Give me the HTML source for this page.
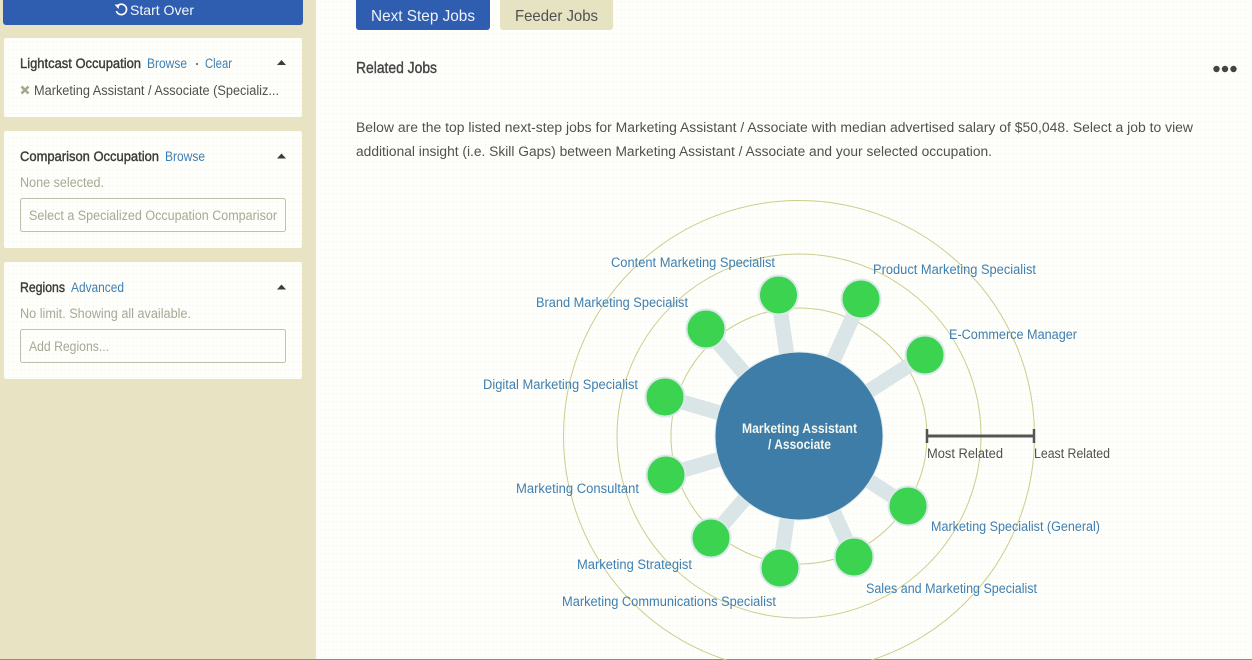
<!DOCTYPE html>
<html lang="en"><head><meta charset="utf-8"><title>Related Jobs</title>
<style>
html,body{margin:0;padding:0;width:1252px;height:660px;overflow:hidden;background:#fefef8}
svg{display:block}
text{font-family:"Liberation Sans",sans-serif;font-size:13.500px;fill:#505050}
.l{fill:#3f7fb0}
.m{fill:#a8a896}
.h{fill:#3c3c3c;stroke:#3c3c3c;stroke-width:.4px}
</style></head><body>
<svg width="1252" height="660" viewBox="0 0 1252 660" xmlns="http://www.w3.org/2000/svg">
<defs>
<pattern id="d" width="8" height="8" patternUnits="userSpaceOnUse">
<rect width="8" height="8" fill="#fefefb"/>
<rect x="1" y="1" width="1" height="1" fill="#ffffa0"/>
<rect x="5" y="5" width="1" height="1" fill="#ffffa0"/>
<rect x="5" y="1" width="1" height="1" fill="#e8e8f6"/>
</pattern>
</defs>
<rect width="1252" height="660" fill="url(#d)"/>
<rect width="316" height="660" fill="#e8e3c2"/>
<rect x="0" y="659" width="1252" height="1" fill="#8c8c8c"/>

<!-- sidebar -->
<rect x="3" y="-4" width="300" height="29" rx="3" fill="#2f5db0"/>
<path d="M117 6.500a5.200 5.200 0 1 1-.6 4.600" fill="none" stroke="#fff" stroke-width="1.700"/>
<path d="M114.500 4.500l5 .2-1 4.300z" fill="#fff"/>
<text x="130" y="15" textLength="64" lengthAdjust="spacingAndGlyphs" style="fill:#f4f6fb;font-size:14px">Start Over</text>

<rect x="4" y="38" width="298" height="79" rx="2" fill="url(#d)"/>
<rect x="4" y="131" width="298" height="117" rx="2" fill="url(#d)"/>
<rect x="4" y="262" width="298" height="117" rx="2" fill="url(#d)"/>

<text class="h" x="20" y="68" textLength="121" lengthAdjust="spacingAndGlyphs">Lightcast Occupation</text>
<text class="l" x="147" y="68" textLength="40" lengthAdjust="spacingAndGlyphs">Browse</text>
<circle cx="197" cy="64" r="1" fill="#555"/>
<text class="l" x="205" y="68" textLength="27" lengthAdjust="spacingAndGlyphs">Clear</text>
<path d="M277 65l4.500-5 4.500 5z" fill="#3c3c3c"/>
<path d="M21.500 86.500l7 7M28.500 86.500l-7 7" stroke="#a5a58f" stroke-width="2.600" fill="none"/>
<text x="34" y="95" textLength="245" lengthAdjust="spacingAndGlyphs">Marketing Assistant / Associate (Specializ...</text>

<text class="h" x="20" y="161" textLength="139" lengthAdjust="spacingAndGlyphs">Comparison Occupation</text>
<text class="l" x="165" y="161" textLength="40" lengthAdjust="spacingAndGlyphs">Browse</text>
<path d="M277 158.500l4.500-5 4.500 5z" fill="#3c3c3c"/>
<text class="m" x="20" y="187" textLength="84" lengthAdjust="spacingAndGlyphs">None selected.</text>
<rect x="20.500" y="198.500" width="265" height="33" rx="2" fill="none" stroke="#c0c0ae"/>
<text class="m" x="29" y="220" textLength="248" lengthAdjust="spacingAndGlyphs">Select a Specialized Occupation Comparisor</text>

<text class="h" x="20" y="292" textLength="45" lengthAdjust="spacingAndGlyphs">Regions</text>
<text class="l" x="71" y="292" textLength="53" lengthAdjust="spacingAndGlyphs">Advanced</text>
<path d="M277 289.500l4.500-5 4.500 5z" fill="#3c3c3c"/>
<text class="m" x="20" y="318" textLength="171" lengthAdjust="spacingAndGlyphs">No limit. Showing all available.</text>
<rect x="20.500" y="329.500" width="265" height="33" rx="2" fill="none" stroke="#c0c0ae"/>
<text class="m" x="29" y="351" textLength="80" lengthAdjust="spacingAndGlyphs">Add Regions...</text>

<!-- tabs -->
<rect x="356" y="-4" width="134" height="34" rx="3" fill="#2f5db0"/>
<text x="371" y="21" textLength="104" lengthAdjust="spacingAndGlyphs" style="fill:#f0f3fa;font-size:16px">Next Step Jobs</text>
<rect x="500" y="-4" width="113" height="34" rx="3" fill="#e6e3c3"/>
<text x="515" y="21" textLength="83" lengthAdjust="spacingAndGlyphs" style="font-size:16px">Feeder Jobs</text>

<text x="356" y="73" textLength="81" lengthAdjust="spacingAndGlyphs" style="fill:#444;stroke:#444;stroke-width:.4px;font-size:16px">Related Jobs</text>
<circle cx="1216.500" cy="69" r="3.200" fill="#444"/><circle cx="1225" cy="69" r="3.200" fill="#444"/><circle cx="1233.500" cy="69" r="3.200" fill="#444"/>

<text x="356" y="132" textLength="837" lengthAdjust="spacingAndGlyphs">Below are the top listed next-step jobs for Marketing Assistant / Associate with median advertised salary of $50,048. Select a job to view</text>
<text x="356" y="156" textLength="636" lengthAdjust="spacingAndGlyphs">additional insight (i.e. Skill Gaps) between Marketing Assistant / Associate and your selected occupation.</text>

<!-- rings -->
<g fill="none" stroke="#cdcd8e" stroke-width="1">
<circle cx="799" cy="436" r="128"/>
<circle cx="799" cy="436" r="182"/>
<circle cx="799" cy="436" r="235.500"/>
</g>

<!-- links -->
<g stroke="#d9e5e6" stroke-width="15" fill="none">
<path d="M799 436L778 295"/><path d="M799 436L861 299"/><path d="M799 436L925 355"/>
<path d="M799 436L706 329"/><path d="M799 436L665 397"/><path d="M799 436L666 475"/>
<path d="M799 436L711 538"/><path d="M799 436L780 568"/><path d="M799 436L854 557"/><path d="M799 436L908 506"/>
</g>

<!-- nodes -->
<g fill="#3bd350" stroke="#dce9ea" stroke-width="2">
<circle cx="778.500" cy="295" r="19.500"/><circle cx="861" cy="299" r="19.500"/><circle cx="925" cy="355" r="19.500"/>
<circle cx="706" cy="329" r="19.500"/><circle cx="665" cy="397" r="19.500"/><circle cx="666" cy="475" r="19.500"/>
<circle cx="711" cy="538" r="19.500"/><circle cx="780" cy="568" r="19.500"/><circle cx="854" cy="557" r="19.500"/><circle cx="908" cy="506" r="19.500"/>
</g>
<circle cx="799" cy="436" r="84" fill="#3d7da8" stroke="#dce9ea" stroke-width="1"/>
<text x="742" y="433" textLength="115" lengthAdjust="spacingAndGlyphs" style="fill:#f6f6ee;font-weight:bold">Marketing Assistant</text>
<text x="768" y="449" textLength="63" lengthAdjust="spacingAndGlyphs" style="fill:#f6f6ee;font-weight:bold">/ Associate</text>

<!-- labels -->
<text class="l" x="611" y="267" textLength="164" lengthAdjust="spacingAndGlyphs">Content Marketing Specialist</text>
<text class="l" x="873" y="274" textLength="163" lengthAdjust="spacingAndGlyphs">Product Marketing Specialist</text>
<text class="l" x="536" y="307" textLength="152" lengthAdjust="spacingAndGlyphs">Brand Marketing Specialist</text>
<text class="l" x="949" y="339" textLength="128" lengthAdjust="spacingAndGlyphs">E-Commerce Manager</text>
<text class="l" x="483" y="389" textLength="155" lengthAdjust="spacingAndGlyphs">Digital Marketing Specialist</text>
<text class="l" x="516" y="493" textLength="123" lengthAdjust="spacingAndGlyphs">Marketing Consultant</text>
<text class="l" x="931" y="531" textLength="169" lengthAdjust="spacingAndGlyphs">Marketing Specialist (General)</text>
<text class="l" x="577" y="569" textLength="115" lengthAdjust="spacingAndGlyphs">Marketing Strategist</text>
<text class="l" x="866" y="593" textLength="171" lengthAdjust="spacingAndGlyphs">Sales and Marketing Specialist</text>
<text class="l" x="562" y="606" textLength="214" lengthAdjust="spacingAndGlyphs">Marketing Communications Specialist</text>

<!-- scale -->
<path d="M927 436H1034" stroke="#555" stroke-width="3"/>
<path d="M927 429V443M1034 429V443" stroke="#555" stroke-width="2.500"/>
<text x="927" y="458" textLength="76" lengthAdjust="spacingAndGlyphs">Most Related</text>
<text x="1034" y="458" textLength="76" lengthAdjust="spacingAndGlyphs">Least Related</text>
</svg>
</body></html>
